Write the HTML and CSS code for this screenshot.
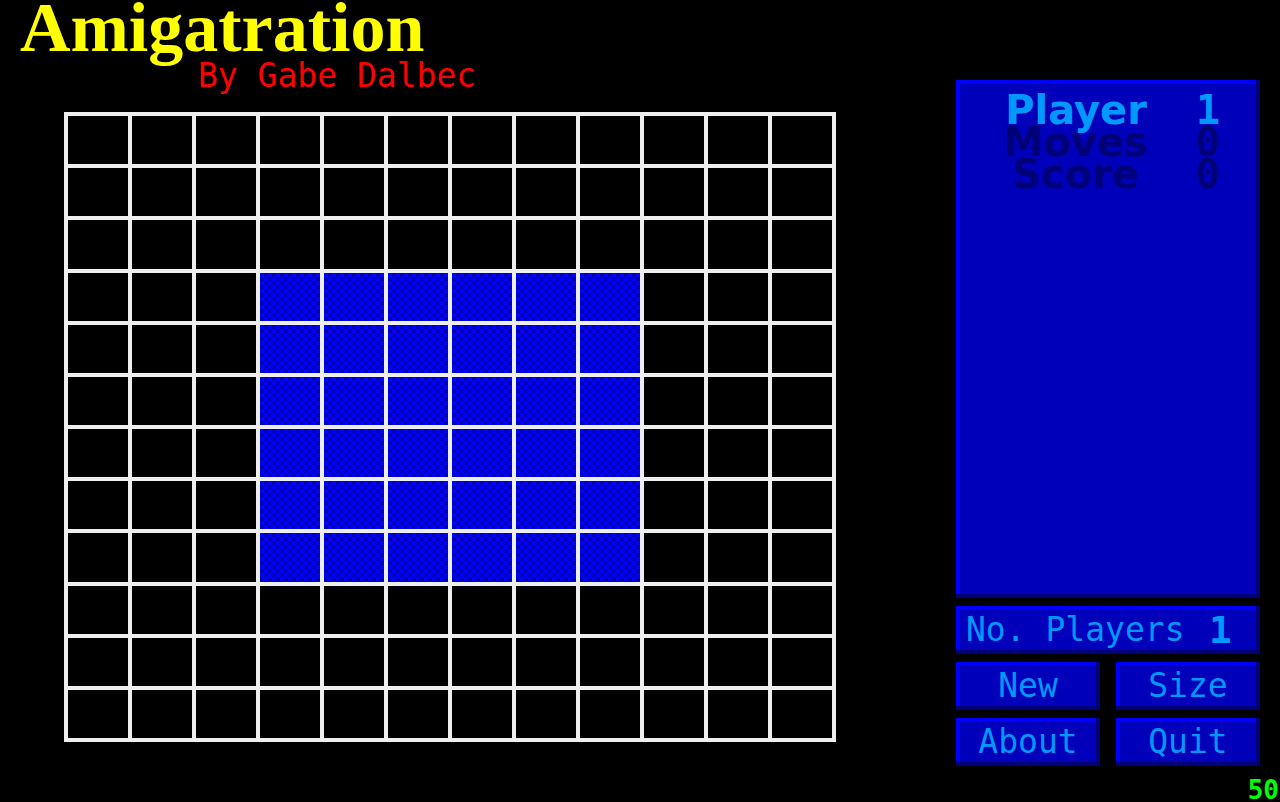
FILE: index.html
```
<!DOCTYPE html>
<html lang="en">
<head>
    <meta charset="UTF-8">
    <title>Amigatration</title>
    <link rel="stylesheet" href="styles.css">
</head>
<body>
    <div class="screen">
        <main class="game">
            <header class="header">
                <h1 class="title">Amigatration</h1>
                <p class="author">By Gabe Dalbec</p>
            </header>
            <div class="board" id="board"></div>
        </main>
        <aside class="side">
            <div class="panel scores">
                <div class="row current"><span>Player</span><span class="num">1</span></div>
                <div class="row"><span>Moves</span><span class="num">0</span></div>
                <div class="row"><span>Score</span><span class="num">0</span></div>
            </div>
            <button class="panel btn players" type="button">No. Players <b class="count">1</b></button>
            <div class="buttons">
                <button class="panel btn" type="button">New</button>
                <button class="panel btn" type="button">Size</button>
                <button class="panel btn" type="button">About</button>
                <button class="panel btn" type="button">Quit</button>
            </div>
        </aside>
    </div>
    <footer class="fps">50</footer>
    <script src="board.js"></script>
</body>
</html>
```
FILE: styles.css
```
* {
    box-sizing: border-box;
}
body {
    margin: 0;
    min-height: 100vh;
    display: flex;
    flex-direction: column;
    justify-content: space-between;
    background-color: #000;
    font-family: "DejaVu Sans Mono", monospace;
    font-size: 33px;
    line-height: 32px;
}
.screen {
    display: flex;
    gap: 120px;
    padding-right: 20px;
}
.game {
    flex: 1;
    padding-left: 64px;
}
.header {
    height: 112px;
    margin-left: -44px;
}
.title {
    margin: 0;
    color: #ff0;
    font-family: "Liberation Serif", serif;
    font-size: 70px;
    font-weight: bold;
    line-height: 56px;
}
.author {
    margin: 4px 0 0 178px;
    color: #f00;
}

/* board */
.board {
    display: grid;
    grid-template-columns: repeat(12, 1fr);
    grid-template-rows: repeat(12, 1fr);
    gap: 4px;
    padding: 4px;
    aspect-ratio: 772 / 630;
    background-color: #eee;
}
.cell {
    background-color: #000;
}
.cell.active {
    background: repeating-conic-gradient(#00b 0 25%, #00f 0 50%) 0 0 / 8px 8px;
}

/* side bar */
.side {
    width: 304px;
    padding-top: 80px;
    display: flex;
    flex-direction: column;
    gap: 8px;
}
.panel {
    background-color: #00b;
    box-shadow: inset -4px -4px #007, inset 4px 4px #00f;
}
.scores {
    height: 518px;
    padding: 14px 40px 0 28px;
    font-family: "DejaVu Sans", sans-serif;
    font-size: 40px;
    font-weight: bold;
    color: #007;
}
.row {
    display: grid;
    grid-template-columns: 184px 1fr;
    text-align: center;
}
.num {
    font-family: "DejaVu Sans Mono", monospace;
    text-align: right;
}
.current {
    color: #09f;
}
.btn {
    height: 48px;
    padding: 0;
    border: none;
    color: #09f;
    font: inherit;
}
.players {
    display: flex;
    align-items: center;
    justify-content: space-between;
    padding: 0 28px 0 10px;
}
.count {
    font-size: 38px;
}
.buttons {
    display: grid;
    grid-template-columns: 1fr 1fr;
    gap: 8px 16px;
}

.fps {
    padding-right: 1px;
    color: #0f0;
    font-size: 26px;
    font-weight: bold;
    line-height: 24px;
    text-align: right;
}
```
FILE: board.js
```
var board = document.getElementById('board');
for (var y = 0; y < 12; y += 1) {
    for (var x = 0; x < 12; x += 1) {
        var cell = document.createElement('div');
        cell.className = 'cell';
        if (x > 2 && x < 9 && y > 2 && y < 9) {
            cell.classList.add('active');
        }
        board.appendChild(cell);
    }
}
```
